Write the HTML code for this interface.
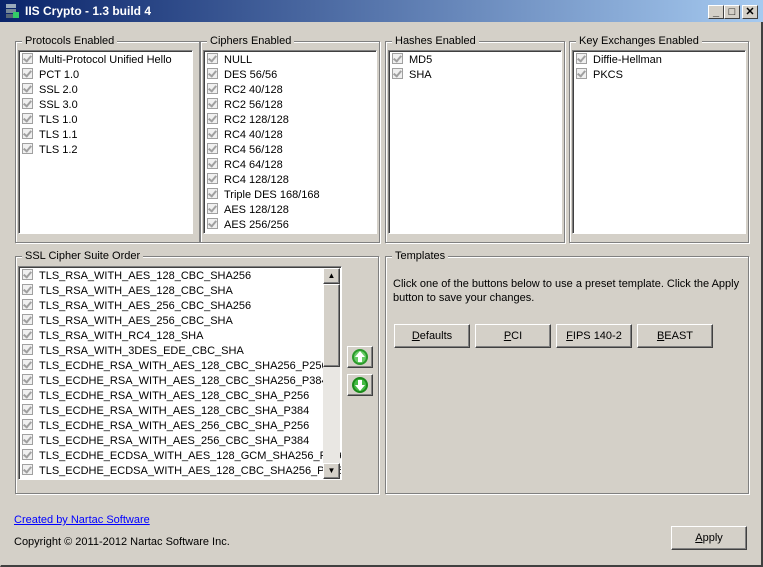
<!DOCTYPE html>
<html><head><meta charset="utf-8"><style>
*{box-sizing:border-box;margin:0;padding:0}
body{width:763px;height:567px;background:#d4d0c8;font-family:"Liberation Sans",Tahoma,sans-serif;font-size:11px;position:relative;overflow:hidden;color:#000}
.abs{position:absolute}
.title{left:0;top:0;width:763px;height:22px;background:linear-gradient(to right,#0a246a,#a6caf0);color:#fff;font-weight:bold;font-size:12px}
.title span{position:absolute;left:25px;top:4px}
.frame{left:0;top:0;width:763px;height:567px;border:1px solid #d4d0c8;border-right:2px solid #404040;border-bottom:2px solid #404040}
.tb{width:16px;height:14px;top:5px;background:#d4d0c8;border:1px solid;border-color:#fff #404040 #404040 #fff;font-size:11px;line-height:12px;text-align:center;font-weight:bold}
.grp{border:1px solid #808080;box-shadow:1px 1px 0 #fff inset,1px 1px 0 #fff}
.grp .lg{position:absolute;top:-8px;left:6px;background:#d4d0c8;padding:0 3px;line-height:14px}
.list{background:#fff;border:1px solid;border-color:#808080 #fff #fff #808080;box-shadow:inset 1px 1px 0 #404040}
.row{position:absolute;left:3px;height:15px;line-height:15px;white-space:nowrap;margin-top:1px}
.cb{display:inline-block;width:11px;height:11px;border:1px solid #a0a0a0;background:#f0f0f0;vertical-align:-1px;margin-right:6px;position:relative}
.cb:after{content:"";position:absolute;left:2px;top:0px;width:3px;height:6px;border:solid #a0a0a0;border-width:0 2px 2px 0;transform:rotate(40deg)}
.btn{background:#d4d0c8;border:1px solid;border-color:#fff #404040 #404040 #fff;box-shadow:inset -1px -1px 0 #808080;text-align:center;line-height:20px}
.lnk{color:#00f;text-decoration:underline}
</style></head><body>
<div class="abs frame"></div>
<div class="abs title"><svg class="abs" style="left:4px;top:3px" width="16" height="16"><rect x="2" y="1" width="10" height="4" fill="#9ab"/><rect x="2" y="6" width="10" height="4" fill="#789"/><rect x="2" y="11" width="10" height="4" fill="#567"/><rect x="9" y="9" width="6" height="6" fill="#3c6"/></svg><span>IIS Crypto - 1.3 build 4</span></div>
<div class="abs tb" style="left:708px">_</div>
<div class="abs tb" style="left:724px">□</div>
<div class="abs tb" style="left:742px">✕</div>

<div class="abs grp" style="left:15px;top:41px;width:185px;height:202px"><div class="lg">Protocols Enabled</div></div>
<div class="abs list" style="left:18px;top:50px;width:175px;height:184px">
<div class="row" style="top:1px"><i class="cb"></i>Multi-Protocol Unified Hello</div>
<div class="row" style="top:16px"><i class="cb"></i>PCT 1.0</div>
<div class="row" style="top:31px"><i class="cb"></i>SSL 2.0</div>
<div class="row" style="top:46px"><i class="cb"></i>SSL 3.0</div>
<div class="row" style="top:61px"><i class="cb"></i>TLS 1.0</div>
<div class="row" style="top:76px"><i class="cb"></i>TLS 1.1</div>
<div class="row" style="top:91px"><i class="cb"></i>TLS 1.2</div>
</div>

<div class="abs grp" style="left:200px;top:41px;width:180px;height:202px"><div class="lg">Ciphers Enabled</div></div>
<div class="abs list" style="left:203px;top:50px;width:174px;height:184px">
<div class="row" style="top:1px"><i class="cb"></i>NULL</div>
<div class="row" style="top:16px"><i class="cb"></i>DES 56/56</div>
<div class="row" style="top:31px"><i class="cb"></i>RC2 40/128</div>
<div class="row" style="top:46px"><i class="cb"></i>RC2 56/128</div>
<div class="row" style="top:61px"><i class="cb"></i>RC2 128/128</div>
<div class="row" style="top:76px"><i class="cb"></i>RC4 40/128</div>
<div class="row" style="top:91px"><i class="cb"></i>RC4 56/128</div>
<div class="row" style="top:106px"><i class="cb"></i>RC4 64/128</div>
<div class="row" style="top:121px"><i class="cb"></i>RC4 128/128</div>
<div class="row" style="top:136px"><i class="cb"></i>Triple DES 168/168</div>
<div class="row" style="top:151px"><i class="cb"></i>AES 128/128</div>
<div class="row" style="top:166px"><i class="cb"></i>AES 256/256</div>
</div>

<div class="abs grp" style="left:385px;top:41px;width:180px;height:202px"><div class="lg">Hashes Enabled</div></div>
<div class="abs list" style="left:388px;top:50px;width:174px;height:184px">
<div class="row" style="top:1px"><i class="cb"></i>MD5</div>
<div class="row" style="top:16px"><i class="cb"></i>SHA</div>
</div>

<div class="abs grp" style="left:569px;top:41px;width:180px;height:202px"><div class="lg">Key Exchanges Enabled</div></div>
<div class="abs list" style="left:572px;top:50px;width:174px;height:184px">
<div class="row" style="top:1px"><i class="cb"></i>Diffie-Hellman</div>
<div class="row" style="top:16px"><i class="cb"></i>PKCS</div>
</div>

<div class="abs grp" style="left:15px;top:256px;width:364px;height:238px"><div class="lg">SSL Cipher Suite Order</div></div>
<div class="abs list" style="left:18px;top:266px;width:324px;height:214px;overflow:hidden">
<div class="row" style="top:1px"><i class="cb"></i>TLS_RSA_WITH_AES_128_CBC_SHA256</div>
<div class="row" style="top:16px"><i class="cb"></i>TLS_RSA_WITH_AES_128_CBC_SHA</div>
<div class="row" style="top:31px"><i class="cb"></i>TLS_RSA_WITH_AES_256_CBC_SHA256</div>
<div class="row" style="top:46px"><i class="cb"></i>TLS_RSA_WITH_AES_256_CBC_SHA</div>
<div class="row" style="top:61px"><i class="cb"></i>TLS_RSA_WITH_RC4_128_SHA</div>
<div class="row" style="top:76px"><i class="cb"></i>TLS_RSA_WITH_3DES_EDE_CBC_SHA</div>
<div class="row" style="top:91px"><i class="cb"></i>TLS_ECDHE_RSA_WITH_AES_128_CBC_SHA256_P256</div>
<div class="row" style="top:106px"><i class="cb"></i>TLS_ECDHE_RSA_WITH_AES_128_CBC_SHA256_P384</div>
<div class="row" style="top:121px"><i class="cb"></i>TLS_ECDHE_RSA_WITH_AES_128_CBC_SHA_P256</div>
<div class="row" style="top:136px"><i class="cb"></i>TLS_ECDHE_RSA_WITH_AES_128_CBC_SHA_P384</div>
<div class="row" style="top:151px"><i class="cb"></i>TLS_ECDHE_RSA_WITH_AES_256_CBC_SHA_P256</div>
<div class="row" style="top:166px"><i class="cb"></i>TLS_ECDHE_RSA_WITH_AES_256_CBC_SHA_P384</div>
<div class="row" style="top:181px"><i class="cb"></i>TLS_ECDHE_ECDSA_WITH_AES_128_GCM_SHA256_P256</div>
<div class="row" style="top:196px"><i class="cb"></i>TLS_ECDHE_ECDSA_WITH_AES_128_CBC_SHA256_P256</div>
<div class="abs" style="left:304px;top:1px;width:17px;height:211px;background:#e9e7e3;z-index:2"></div>
<div class="abs btn" style="left:304px;top:1px;width:17px;height:16px;line-height:14px;font-size:8px;z-index:3">▲</div>
<div class="abs btn" style="left:304px;top:17px;width:17px;height:83px;z-index:3"></div>
<div class="abs btn" style="left:304px;top:196px;width:17px;height:16px;line-height:14px;font-size:8px;z-index:3">▼</div>
</div>
<div class="abs btn" style="left:347px;top:346px;width:26px;height:22px"><svg width="18" height="18" style="margin-top:1px"><circle cx="9" cy="9" r="8" fill="#2a9a2a"/><circle cx="9" cy="9" r="6" fill="#6c6"/><path d="M9 3 L14 9 L11 9 L11 14 L7 14 L7 9 L4 9Z" fill="#fff"/></svg></div>
<div class="abs btn" style="left:347px;top:374px;width:26px;height:22px"><svg width="18" height="18" style="margin-top:1px"><circle cx="9" cy="9" r="8" fill="#1a8a1a"/><circle cx="9" cy="9" r="6" fill="#4b4"/><path d="M9 15 L14 9 L11 9 L11 4 L7 4 L7 9 L4 9Z" fill="#fff"/></svg></div>

<div class="abs grp" style="left:385px;top:256px;width:364px;height:238px"><div class="lg">Templates</div></div>
<div class="abs" style="left:393px;top:277px;width:354px;line-height:14px">Click one of the buttons below to use a preset template. Click the Apply<br>button to save your changes.</div>
<div class="abs btn" style="left:394px;top:324px;width:76px;height:24px;line-height:22px"><u>D</u>efaults</div>
<div class="abs btn" style="left:475px;top:324px;width:76px;height:24px;line-height:22px"><u>P</u>CI</div>
<div class="abs btn" style="left:556px;top:324px;width:76px;height:24px;line-height:22px"><u>F</u>IPS 140-2</div>
<div class="abs btn" style="left:637px;top:324px;width:76px;height:24px;line-height:22px"><u>B</u>EAST</div>

<div class="abs lnk" style="left:14px;top:514px">Created by Nartac Software</div>
<div class="abs" style="left:14px;top:536px">Copyright © 2011-2012 Nartac Software Inc.</div>
<div class="abs btn" style="left:671px;top:526px;width:76px;height:24px;line-height:22px"><u>A</u>pply</div>
</body></html>
